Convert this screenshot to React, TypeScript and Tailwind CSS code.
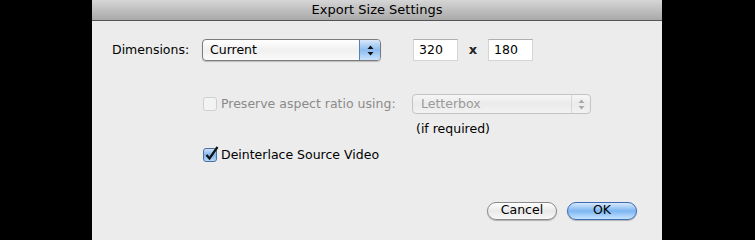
const font = { fontFamily: '"DejaVu Sans", "Liberation Sans", sans-serif' };

function Arrows({ color }: { color: string }) {
  return (
    <svg width="7" height="11" viewBox="0 0 7 11">
      <path d="M3.5 0.5 L6.5 4 L0.5 4 Z" fill={color} />
      <path d="M0.5 7 L6.5 7 L3.5 10.5 Z" fill={color} />
    </svg>
  );
}

function PopUp({ label, disabled }: { label: string; disabled?: boolean }) {
  if (disabled) {
    return (
      <div className="flex h-[20px] w-[179px] items-center rounded-[4px] border border-[#c4c4c4] bg-gradient-to-b from-[#f6f6f6] via-[#ebebeb] to-[#f2f2f2]">
        <span className="flex-1 pl-[8px] text-[12.5px] text-[#9a9a9a]">{label}</span>
        <div className="flex h-full w-[19px] items-center justify-center border-l border-[#d6d6d6]">
          <Arrows color="#a8a8a8" />
        </div>
      </div>
    );
  }
  return (
    <div className="flex h-[22px] w-[179px] items-center overflow-hidden rounded-[4px] border border-[#7b7b7b] bg-gradient-to-b from-[#ffffff] via-[#f0f0f0] to-[#fafafa] shadow-[0_1px_1px_rgba(0,0,0,0.2)]">
      <span className="flex-1 pl-[7px] text-[12.5px] text-black">{label}</span>
      <div className="flex h-full w-[21px] items-center justify-center border-l border-[#5b7fb5] bg-gradient-to-b from-[#d8e8fa] via-[#8cbcf0] to-[#c8e2fc]">
        <Arrows color="#111" />
      </div>
    </div>
  );
}

function Field({ value }: { value: string }) {
  return (
    <div className="flex h-[22px] w-[45px] items-center border border-[#d4d4d4] border-t-[#b0b0b0] bg-white pl-[5px] text-[12.5px] text-black">
      {value}
    </div>
  );
}

function Check({ checked, disabled }: { checked?: boolean; disabled?: boolean }) {
  if (checked) {
    return (
      <div className="relative h-[14px] w-[14px] rounded-[3px] border border-[#4f6f9e] bg-gradient-to-b from-[#cfe3fb] via-[#7eb3ec] to-[#b7d8fb]">
        <svg className="absolute left-[1px] top-[-3px]" width="14" height="15" viewBox="0 0 14 15">
          <path d="M1.5 9 L4.5 12.5 L12.5 1" stroke="#111" strokeWidth="2.2" fill="none" />
        </svg>
      </div>
    );
  }
  return (
    <div
      className={`h-[14px] w-[14px] rounded-[3px] border ${disabled ? "border-[#cfcfcf] bg-[#f3f3f3]" : "border-[#8a8a8a] bg-white"}`}
    />
  );
}

function Button({ label, primary }: { label: string; primary?: boolean }) {
  return (
    <div
      className={`flex h-[18px] w-[70px] items-center justify-center rounded-full border text-[12.5px] text-black shadow-[0_1px_1px_rgba(0,0,0,0.25)] ${
        primary
          ? "border-[#3d6bb3] bg-gradient-to-b from-[#d7e8fc] via-[#7db6f1] to-[#c6e3ff]"
          : "border-[#8a8a8a] bg-gradient-to-b from-[#ffffff] via-[#e9e9e9] to-[#f8f8f8]"
      }`}
    >
      {label}
    </div>
  );
}

export default function App() {
  return (
    <div className="h-[240px] w-[755px] bg-black" style={font}>
      <div className="ml-[92px] flex h-[240px] w-[570px] flex-col bg-[#ececec]">
        <div className="flex h-[21px] items-center justify-center border-b border-[#555] bg-gradient-to-b from-[#d6d6d6] to-[#a9a9a9] text-[13px] text-black">
          Export Size Settings
        </div>

        <div className="mt-[18px] flex items-center pl-[20px]">
          <span className="w-[78px] text-[12.5px] text-black">Dimensions:</span>
          <div className="ml-[12px]">
            <PopUp label="Current" />
          </div>
          <div className="ml-[32px]">
            <Field value="320" />
          </div>
          <span className="w-[30px] text-center text-[13px] font-bold text-[#222]">x</span>
          <Field value="180" />
        </div>

        <div className="mt-[33px] flex items-center pl-[111px]">
          <Check disabled />
          <span className="ml-[4px] w-[191px] text-[12.5px] text-[#8a8a8a]">Preserve aspect ratio using:</span>
          <PopUp label="Letterbox" disabled />
        </div>
        <div className="mt-[6px] pl-[324px] text-[12.5px] text-black">(if required)</div>

        <div className="mt-[7px] flex items-center pl-[111px]">
          <Check checked />
          <span className="ml-[4px] text-[12.5px] text-black">Deinterlace Source Video</span>
        </div>

        <div className="mt-[37px] flex justify-end gap-[10px] pr-[25px]">
          <Button label="Cancel" />
          <Button label="OK" primary />
        </div>
      </div>
    </div>
  );
}
